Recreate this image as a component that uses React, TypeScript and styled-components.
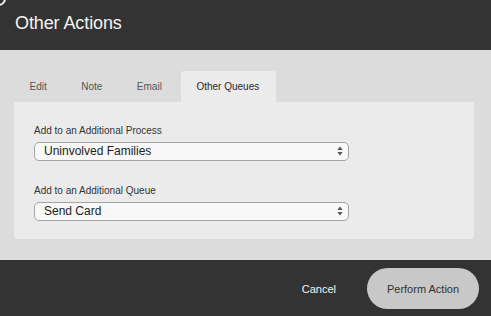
import React, { useState } from "react";
import styled, { createGlobalStyle } from "styled-components";

const Global = createGlobalStyle`
  html, body {
    margin: 0;
    padding: 0;
    background: #dcdcdc;
  }
  body {
    font-family: "Liberation Sans", Arial, Helvetica, sans-serif;
  }
`;

const Modal = styled.div`
  position: relative;
  width: 491px;
  height: 316px;
  display: flex;
  flex-direction: column;
  overflow: hidden;
  background: #dcdcdc;
`;

const CloseRing = styled.span`
  position: absolute;
  left: -9px;
  top: -9px;
  width: 11px;
  height: 11px;
  border: 2px solid #f2f2f2;
  border-radius: 50%;
`;

const Header = styled.header`
  height: 50px;
  flex: none;
  background: #333333;
  display: flex;
  align-items: center;
  padding: 0 15px 4px;
  box-sizing: border-box;
`;

const Title = styled.h1`
  margin: 0;
  font-size: 18px;
  font-weight: normal;
  color: #f4f4f4;
  letter-spacing: -0.1px;
`;

const Body = styled.main`
  flex: 1;
  padding: 21px 17px 20px 14px;
  display: flex;
  flex-direction: column;
`;

const Tabs = styled.nav`
  display: flex;
  gap: 2px;
  height: 31px;
`;

const Tab = styled.button<{ $active?: boolean }>`
  border: none;
  margin: 0;
  padding: 0 17px 1px 15.5px;
  font-family: inherit;
  font-size: 10px;
  color: ${(p) => (p.$active ? "#2a2a2a" : "#555555")};
  background: ${(p) => (p.$active ? "#ebebeb" : "transparent")};
  border-radius: 3px 3px 0 0;
  cursor: pointer;
`;

const Panel = styled.section`
  background: #ebebeb;
  border-radius: 0 0 4px 4px;
  padding: 23px 20px 20px;
  display: flex;
  flex-direction: column;
  gap: 25px;
  height: 137px;
  box-sizing: border-box;
`;

const Field = styled.div`
  display: flex;
  flex-direction: column;
  gap: 4px;
  width: 315px;
`;

const Label = styled.label`
  font-size: 10px;
  line-height: 12px;
  color: #333333;
`;

const SelectWrap = styled.div`
  position: relative;
  height: 19px;
`;

const Select = styled.select`
  appearance: none;
  -webkit-appearance: none;
  width: 100%;
  height: 19px;
  box-sizing: border-box;
  margin: 0;
  padding: 0 20px 0 9px;
  font-family: inherit;
  font-size: 12px;
  color: #222222;
  background: #f8f8f8;
  border: 1px solid #a4a4a4;
  border-radius: 5px;
  outline: none;
`;

const Arrows = styled.svg`
  position: absolute;
  right: 6px;
  top: 5px;
  pointer-events: none;
`;

const Footer = styled.footer`
  height: 56px;
  flex: none;
  background: #333333;
  display: flex;
  justify-content: flex-end;
  align-items: center;
  gap: 31px;
  padding: 1px 12px 0 0;
  box-sizing: border-box;
`;

const Cancel = styled.button`
  border: none;
  background: none;
  padding: 0;
  font-family: inherit;
  font-size: 11px;
  color: #f4f4f4;
  cursor: pointer;
`;

const Primary = styled.button`
  width: 112px;
  height: 41px;
  border: none;
  border-radius: 21px;
  background: #c8c8c8;
  font-family: inherit;
  font-size: 11px;
  color: #303030;
  cursor: pointer;
`;

const UpDown = () => (
  <Arrows width="6" height="10" viewBox="0 0 6 10">
    <path d="M3 0.5 L5.6 4 L0.4 4 Z" fill="#555" />
    <path d="M3 9.5 L5.6 6 L0.4 6 Z" fill="#555" />
  </Arrows>
);

const tabs = ["Edit", "Note", "Email", "Other Queues"];

export default function App() {
  const [active, setActive] = useState("Other Queues");
  return (
    <Modal>
      <Global />
      <CloseRing />
      <Header>
        <Title>Other Actions</Title>
      </Header>
      <Body>
        <Tabs>
          {tabs.map((t) => (
            <Tab key={t} $active={t === active} onClick={() => setActive(t)}>
              {t}
            </Tab>
          ))}
        </Tabs>
        <Panel>
          <Field>
            <Label>Add to an Additional Process</Label>
            <SelectWrap>
              <Select defaultValue="Uninvolved Families">
                <option>Uninvolved Families</option>
              </Select>
              <UpDown />
            </SelectWrap>
          </Field>
          <Field>
            <Label>Add to an Additional Queue</Label>
            <SelectWrap>
              <Select defaultValue="Send Card">
                <option>Send Card</option>
              </Select>
              <UpDown />
            </SelectWrap>
          </Field>
        </Panel>
      </Body>
      <Footer>
        <Cancel>Cancel</Cancel>
        <Primary>Perform Action</Primary>
      </Footer>
    </Modal>
  );
}
